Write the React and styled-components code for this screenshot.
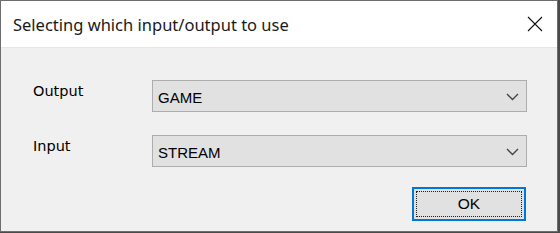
import styled, { createGlobalStyle } from 'styled-components';

const GlobalStyle = createGlobalStyle`
  html, body {
    margin: 0;
    padding: 0;
    background: #4a4a4a;
  }
`;

const Window = styled.div`
  box-sizing: border-box;
  display: flex;
  flex-direction: column;
  width: 558px;
  height: 232px;
  background: #f0f0f0;
  border: 1px solid #6d6d6d;
`;

const TitleBar = styled.div`
  display: flex;
  align-items: center;
  justify-content: space-between;
  height: 46px;
  padding: 0 14px 0 12px;
  background: #fff;
  border-bottom: 1px solid #e6e6e6;
  font-family: 'Noto Sans', 'Open Sans', sans-serif;
  font-size: 16.5px;
  color: #1a1a1a;
`;

const Close = styled.svg`
  width: 16px;
  height: 16px;
`;

const Body = styled.div`
  display: flex;
  flex-direction: column;
  padding: 32px 30px 0 32px;
  font-family: 'Liberation Sans', Arial, sans-serif;
  font-size: 15px;
  color: #000;
`;

const Field = styled.div`
  display: grid;
  grid-template-columns: 119px 1fr;
  margin-bottom: ${(p) => p.$gap}px;
`;

const Label = styled.div`
  padding-top: 3px;
  font-family: 'DejaVu Sans', sans-serif;
  font-size: 14.5px;
`;

const Select = styled.div`
  box-sizing: border-box;
  display: flex;
  align-items: center;
  justify-content: space-between;
  height: 32px;
  padding: 2px 7px 0 5px;
  background: #e1e1e1;
  border: 1px solid #adadad;
`;

const Chevron = styled.svg`
  width: 13px;
  height: 8px;
`;

const Footer = styled.div`
  display: flex;
  justify-content: flex-end;
`;

const Button = styled.button`
  box-sizing: border-box;
  width: 114px;
  height: 34px;
  margin-right: 1px;
  padding: 2px;
  background: #e1e1e1;
  border: 2px solid #0078d7;
  font: inherit;
  font-size: 15.5px;
  color: #000;

  span {
    display: flex;
    align-items: center;
    justify-content: center;
    height: 100%;
    border: 1px dotted #222;
    box-sizing: border-box;
  }
`;

const Dropdown = ({ value }) => (
  <Select>
    {value}
    <Chevron viewBox="0 0 13 8">
      <path d="M1 1l5.5 5.5L12 1" fill="none" stroke="#444" strokeWidth="1.4" />
    </Chevron>
  </Select>
);

const App = () => (
  <>
    <GlobalStyle />
    <Window>
      <TitleBar>
        Selecting which input/output to use
        <Close viewBox="0 0 16 16">
          <path d="M1 1l14 14M15 1L1 15" stroke="#111" strokeWidth="1.1" />
        </Close>
      </TitleBar>
      <Body>
        <Field $gap={23}>
          <Label>Output</Label>
          <Dropdown value="GAME" />
        </Field>
        <Field $gap={20}>
          <Label>Input</Label>
          <Dropdown value="STREAM" />
        </Field>
        <Footer>
          <Button>
            <span>OK</span>
          </Button>
        </Footer>
      </Body>
    </Window>
  </>
);

export default App;
